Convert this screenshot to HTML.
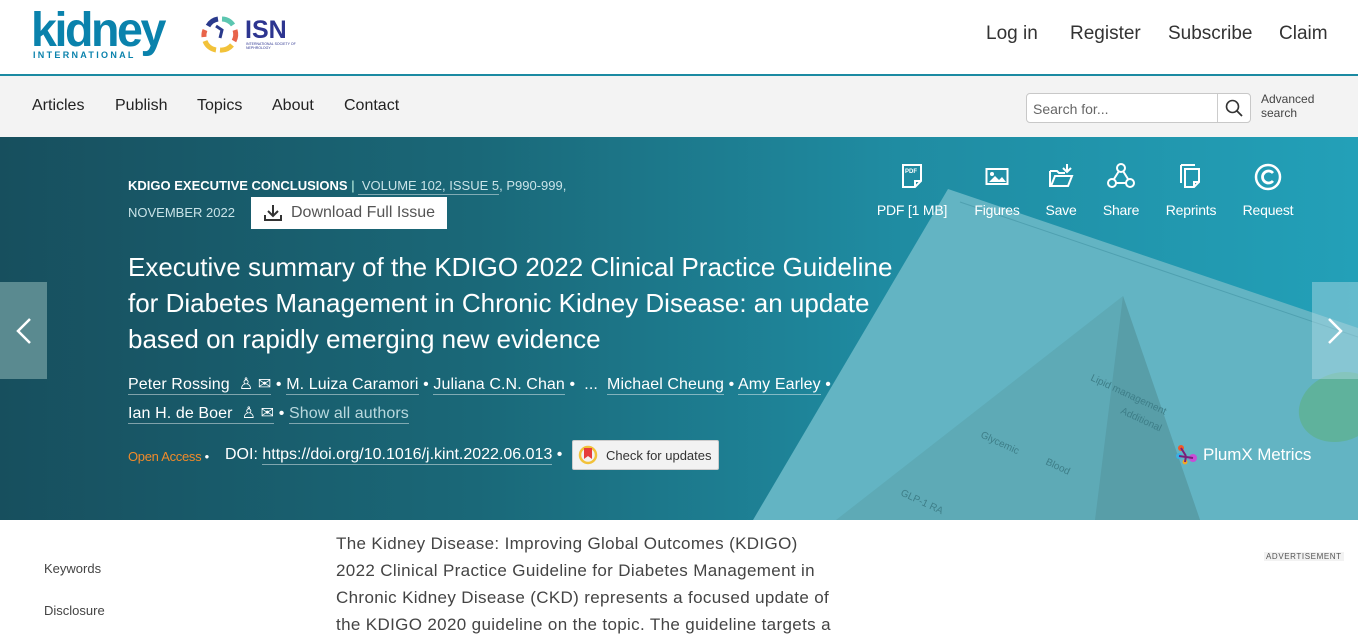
<!DOCTYPE html>
<html><head><meta charset="utf-8">
<style>
*{margin:0;padding:0;box-sizing:border-box}
body{width:1358px;height:635px;overflow:hidden;font-family:"Liberation Sans",Arial,sans-serif;background:#fff;position:relative}
.abs{position:absolute}
#top{height:74px;background:#fff}
#line{top:74px;left:0;width:1358px;height:2px;background:#1b8aa2}
#nav{top:76px;left:0;width:1358px;height:61px;background:#f3f3f3}
#nav a{position:absolute;top:21px;font-size:16px;color:#222;text-decoration:none}
.tl{position:absolute;top:23px;font-size:19px;color:#333}
#hero{top:137px;left:0;width:1358px;height:383px;background:linear-gradient(90deg,#174f5e 0%,#1a6878 35%,#1f8ba1 65%,#23a0b8 100%);overflow:hidden}
.w{color:#fff}
.u{border-bottom:1px solid rgba(255,255,255,.45);padding-bottom:1px}
.act{position:absolute;top:65px;font-size:14px;color:#fff;text-align:center;transform:translateX(-50%);white-space:nowrap;letter-spacing:-.2px}
.ico{position:absolute;top:26px;transform:translateX(-50%)}
</style></head><body>
<div id="top" class="abs" style="left:0;top:0;width:1358px">
  <div class="abs" style="left:31px;top:8px;font-size:48px;font-weight:bold;color:#0a82ac;letter-spacing:-2.5px;line-height:46px;transform:scaleX(.97);transform-origin:left">kidney</div>
  <div class="abs" style="left:33px;top:50px;font-size:9px;font-weight:bold;color:#0a82ac;letter-spacing:2.3px">INTERNATIONAL</div>
  <svg class="abs" style="left:200px;top:14px" width="40" height="40" viewBox="0 0 40 40">
    <path d="M8 12 A14 14 0 0 1 18 5" stroke="#2a3a8c" stroke-width="5" fill="none"/>
    <path d="M22 5 A14 14 0 0 1 33 11" stroke="#5cc6b0" stroke-width="5" fill="none"/>
    <path d="M35 16 A14 14 0 0 1 34 27" stroke="#e8644a" stroke-width="5" fill="none"/>
    <path d="M32 31 A14 14 0 0 1 20 36" stroke="#f2c23a" stroke-width="5" fill="none"/>
    <path d="M16 36 A14 14 0 0 1 5 27" stroke="#f2c23a" stroke-width="5" fill="none"/>
    <path d="M4 23 A14 14 0 0 1 5 16" stroke="#e8644a" stroke-width="5" fill="none"/>
    <path d="M16 12 L22 16 L20 24" stroke="#2a3a8c" stroke-width="3" fill="none"/>
  </svg>
  <div class="abs" style="left:245px;top:16px;font-size:25px;font-weight:bold;color:#2d3590">ISN</div>
  <div class="abs" style="left:246px;top:42px;font-size:3.5px;color:#2d3590;width:50px">INTERNATIONAL SOCIETY OF NEPHROLOGY</div>
  <span class="tl" style="left:986px">Log in</span>
  <span class="tl" style="left:1070px">Register</span>
  <span class="tl" style="left:1168px">Subscribe</span>
  <span class="tl" style="left:1279px">Claim</span>
</div>
<div id="line" class="abs"></div>
<div id="nav" class="abs">
  <a style="left:32px">Articles</a><a style="left:115px">Publish</a><a style="left:197px">Topics</a><a style="left:272px">About</a><a style="left:344px">Contact</a>
  <div class="abs" style="left:1026px;top:17px;width:225px;height:30px;border:1px solid #c8c8c8;border-radius:4px;background:#fff">
    <span class="abs" style="left:6px;top:7px;font-size:14px;color:#666">Search for...</span>
    <div class="abs" style="left:190px;top:0;width:1px;height:28px;background:#ccc"></div>
    <svg class="abs" style="left:197px;top:4px" width="20" height="20" viewBox="0 0 20 20"><circle cx="8.5" cy="8.5" r="6" stroke="#333" stroke-width="1.6" fill="none"/><path d="M13 13 L18 18" stroke="#333" stroke-width="1.8"/></svg>
  </div>
  <div class="abs" style="left:1261px;top:16px;font-size:12px;color:#444;line-height:14px">Advanced<br>search</div>
</div>
<div id="hero" class="abs">
  <svg class="abs" style="left:0;top:0" width="1358" height="383" viewBox="0 0 1358 383">
    <polygon points="948,52 1358,191 1358,383 753,383" fill="#63b4c3"/>
    <polygon points="960,65 1358,200" stroke="#4fa0b0" stroke-width="1" fill="none"/>
    <polygon points="1123,159 1200,383 836,383" fill="#5eaab6"/>
    <polygon points="1123,159 1200,383 1095,383" fill="#589ea8"/>
    <ellipse cx="1340" cy="270" rx="42" ry="34" fill="#5fb29c" transform="rotate(-20 1340 270)"/>
    <text x="1090" y="243" font-size="10" fill="#3e7e88" transform="rotate(25 1090 243)">Lipid management</text>
    <text x="980" y="300" font-size="10" fill="#3e7e88" transform="rotate(25 980 300)">Glycemic</text>
    <text x="1045" y="327" font-size="10" fill="#3e7e88" transform="rotate(25 1045 327)">Blood</text>
    <text x="1120" y="276" font-size="10" fill="#3e7e88" transform="rotate(25 1120 276)">Additional</text>
    <text x="900" y="358" font-size="10" fill="#3e7e88" transform="rotate(25 900 358)">GLP-1 RA</text>
  </svg>
  <div class="abs" style="left:0;top:145px;width:47px;height:97px;background:#5a8a90"></div>
  <svg class="abs" style="left:15px;top:180px" width="20" height="30"><path d="M15 2 L3 14 L15 26" stroke="#fff" stroke-width="2.5" fill="none"/></svg>
  <div class="abs" style="left:1312px;top:145px;width:46px;height:97px;background:rgba(180,220,230,.45)"></div>
  <svg class="abs" style="left:1325px;top:180px" width="20" height="30"><path d="M4 2 L16 14 L4 26" stroke="#fff" stroke-width="2.5" fill="none"/></svg>

  <div class="abs" style="left:128px;top:36px;font-size:13px;color:#fff;line-height:26px;width:500px;white-space:nowrap">
    <b>KDIGO EXECUTIVE CONCLUSIONS</b> <span style="color:#cfe">|</span> <span class="u" style="color:#c9e3e8">&nbsp;VOLUME 102, ISSUE 5</span><span style="color:#c9e3e8">, P990-999,</span>
  </div>
  <div class="abs" style="left:128px;top:68px;font-size:13px;color:#c9e3e8">NOVEMBER 2022</div>
  <div class="abs" style="left:251px;top:60px;width:196px;height:32px;background:#fff">
    <svg class="abs" style="left:12px;top:7px" width="20" height="18" viewBox="0 0 20 18"><path d="M10 1 V11 M5 7 L10 12 L15 7 M2 11 V16 H18 V11" stroke="#333" stroke-width="2" fill="none"/></svg>
    <span class="abs" style="left:40px;top:7px;font-size:16px;color:#555">Download Full Issue</span>
  </div>
  <div class="abs w" style="left:128px;top:112px;font-size:26px;line-height:36px;width:790px;letter-spacing:0;white-space:nowrap">Executive summary of the KDIGO 2022 Clinical Practice Guideline<br>for Diabetes Management in Chronic Kidney Disease: an update<br>based on rapidly emerging new evidence</div>
  <div class="abs w" style="left:128px;top:233px;font-size:16px;line-height:29px;width:760px;white-space:nowrap;letter-spacing:.1px">
    <span class="u">Peter Rossing &nbsp;♙ ✉</span> • <span class="u">M. Luiza Caramori</span> • <span class="u">Juliana C.N. Chan</span> • &nbsp;... &nbsp;<span class="u">Michael Cheung</span> • <span class="u">Amy Earley</span> •<br>
    <span class="u">Ian H. de Boer &nbsp;♙ ✉</span> • <span class="u" style="color:#b9d8de">Show all authors</span>
  </div>
  <div class="abs" style="left:128px;top:312px;font-size:13px;color:#f08a2a;letter-spacing:-.3px">Open Access <span style="color:#fff">•</span></div>
  <div class="abs w" style="left:225px;top:309px;font-size:16px;letter-spacing:0">DOI: <span class="u">https://doi.org/10.1016/j.kint.2022.06.013</span> •</div>
  <div class="abs" style="left:572px;top:303px;width:147px;height:30px;background:#f2f2f2;border:1px solid #ccc;border-radius:2px">
    <svg class="abs" style="left:5px;top:4px" width="20" height="20"><circle cx="10" cy="10" r="8" fill="none" stroke="#f2c23a" stroke-width="2.5"/><path d="M6 3 H14 V14 L10 11 L6 14 Z" fill="#e63c3c"/></svg>
    <span class="abs" style="left:33px;top:7px;font-size:13px;color:#333">Check for updates</span>
  </div>
  <svg class="abs" style="left:1176px;top:307px" width="24" height="22"><circle cx="5" cy="4" r="3" fill="#f05a28"/><circle cx="3" cy="12" r="3" fill="#3ab0e6"/><circle cx="17" cy="14" r="4" fill="#c74ed6"/><circle cx="9" cy="18" r="2.5" fill="#f5a623"/><path d="M5 4 L10 12 M3 12 L17 14 M10 12 L9 18" stroke="#7a1e7a" stroke-width="2"/></svg>
  <div class="abs w" style="left:1203px;top:308px;font-size:17px;letter-spacing:-.1px">PlumX Metrics</div>

  <svg class="ico" style="left:912px" width="22" height="26" viewBox="0 0 22 26"><path d="M2 2 H20 V18 L14 24 H2 Z" fill="none" stroke="#fff" stroke-width="2"/><text x="4" y="10" font-size="6" fill="#fff" font-weight="bold">PDF</text><path d="M14 24 V18 H20" stroke="#fff" stroke-width="2" fill="none"/></svg>
  <div class="act" style="left:912px">PDF [1 MB]</div>
  <svg class="ico" style="left:997px;top:30px" width="24" height="20" viewBox="0 0 24 20"><rect x="1.5" y="2" width="21" height="15" fill="none" stroke="#fff" stroke-width="2"/><circle cx="7" cy="7" r="2" fill="#fff"/><path d="M4 15 L10 9 L14 13 L17 10 L21 15 Z" fill="#fff"/></svg>
  <div class="act" style="left:997px">Figures</div>
  <svg class="ico" style="left:1061px" width="26" height="26" viewBox="0 0 26 26"><path d="M2 8 H9 L11 10 H17 M2 8 V23 H20 L24 13 H7 L3 23" fill="none" stroke="#fff" stroke-width="2"/><path d="M19 1 V9 M15 5 L19 9 L23 5" stroke="#fff" stroke-width="2" fill="none"/></svg>
  <div class="act" style="left:1061px">Save</div>
  <svg class="ico" style="left:1121px" width="28" height="26" viewBox="0 0 28 26"><circle cx="14" cy="5" r="4" fill="none" stroke="#fff" stroke-width="2"/><circle cx="5" cy="20" r="4" fill="none" stroke="#fff" stroke-width="2"/><circle cx="23" cy="20" r="4" fill="none" stroke="#fff" stroke-width="2"/><path d="M12 8 L7 16 M16 8 L21 16 M9 20 H19" stroke="#fff" stroke-width="2"/></svg>
  <div class="act" style="left:1121px">Share</div>
  <svg class="ico" style="left:1191px" width="24" height="26" viewBox="0 0 24 26"><path d="M2 2 H16 M2 2 V20" stroke="#fff" stroke-width="2" fill="none"/><path d="M6 6 H20 V19 L15 24 H6 Z" fill="none" stroke="#fff" stroke-width="2"/><path d="M15 24 V19 H20" stroke="#fff" stroke-width="2" fill="none"/></svg>
  <div class="act" style="left:1191px">Reprints</div>
  <svg class="ico" style="left:1268px" width="28" height="28" viewBox="0 0 28 28"><circle cx="14" cy="14" r="12" fill="none" stroke="#fff" stroke-width="2.5"/><path d="M19 10 A6 6 0 1 0 19 18" fill="none" stroke="#fff" stroke-width="2.8"/></svg>
  <div class="act" style="left:1268px">Request</div>
</div>
<div class="abs" style="left:44px;top:561px;font-size:13px;color:#444">Keywords</div>
<div class="abs" style="left:44px;top:603px;font-size:13px;color:#444">Disclosure</div>
<div class="abs" style="left:336px;top:530px;font-size:17px;line-height:27px;color:#444;letter-spacing:.35px;white-space:nowrap">The Kidney Disease: Improving Global Outcomes (KDIGO)<br>2022 Clinical Practice Guideline for Diabetes Management in<br>Chronic Kidney Disease (CKD) represents a focused update of<br>the KDIGO 2020 guideline on the topic. The guideline targets a</div>
<div class="abs" style="left:1264px;top:552px;font-size:8px;color:#555;letter-spacing:.6px;background:#f2f2f2;padding:0 2px">ADVERTISEMENT</div>
</body></html>
